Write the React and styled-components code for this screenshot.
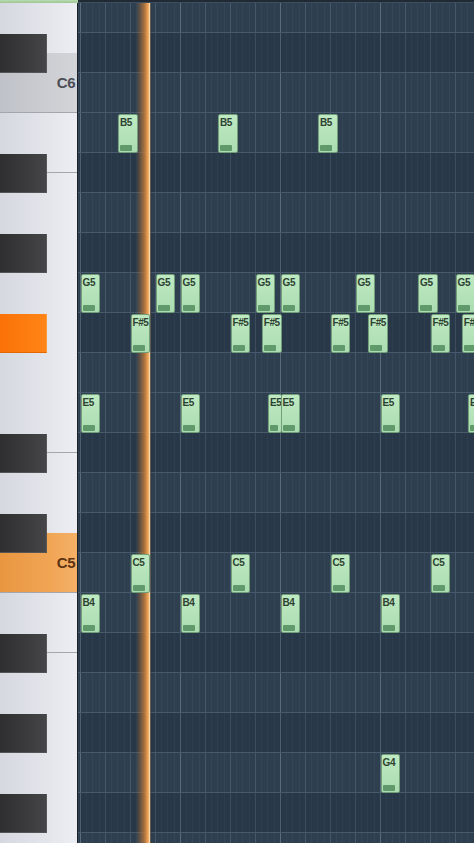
import React from "react";
import styled, { createGlobalStyle } from "styled-components";

const GlobalStyle = createGlobalStyle`
  html, body {
    margin: 0;
    padding: 0;
    background: #2d3e4f;
    overflow: hidden;
  }
`;

const STEP = 6.25;
const ROW = 40;

const Page = styled.div`
  display: flex;
  flex-direction: column;
  width: 474px;
  height: 843px;
  overflow: hidden;
  font-family: "Liberation Sans", Arial, sans-serif;
`;

const TopBar = styled.div`
  display: flex;
  height: 3px;
  flex-shrink: 0;
`;

const TopKeys = styled.div`
  width: 78px;
  background: linear-gradient(180deg, #b9dcb0, #9cc595);
`;

const TopGrid = styled.div`
  flex: 1;
  background: #1f2a35;
  border-bottom: 1px solid #3d4e5e;
`;

const Roll = styled.div`
  display: flex;
  flex: 1;
  overflow: hidden;
`;

const Keyboard = styled.div`
  width: 77px;
  flex-shrink: 0;
  border-right: 1px solid #1b2128;
  overflow: hidden;
`;

const KeyGrid = styled.div`
  display: grid;
  grid-template-columns: 47px 1fr;
  grid-auto-rows: 20px;
  margin-top: -30px;
`;

const whiteBg = {
  none: "linear-gradient(90deg, #d5d8df 0%, #e3e5eb 60%, #eceef3 100%)",
  grey: "linear-gradient(90deg, #bfc2c8 0%, #cbcdd2 60%, #d3d5d9 100%)",
  orange: "linear-gradient(90deg, #e9963f 0%, #f0a453 60%, #f4b066 100%)",
};

const WhiteKey = styled.div`
  grid-column: 1 / -1;
  grid-row: ${({ $start, $span }) => `${$start + 1} / span ${$span}`};
  background: ${({ $hl }) => whiteBg[$hl]};
  border-bottom: 1px solid ${({ $edge }) => ($edge ? "#a2a6ad" : "transparent")};
  display: flex;
  align-items: center;
  justify-content: flex-end;
  padding-right: 2px;
  box-sizing: border-box;
`;

const KeyLabel = styled.span`
  font-size: 15px;
  font-weight: bold;
  letter-spacing: -0.5px;
  color: ${({ $hl }) => ($hl === "orange" ? "#5e3312" : "#4b4e56")};
`;

const BlackKey = styled.div`
  grid-column: 1;
  grid-row: ${({ $start }) => `${$start + 1} / span 2`};
  margin: 1px 0 0 0;
  background: ${({ $active }) =>
    $active
      ? "linear-gradient(90deg, #fa7208, #ff8416)"
      : "linear-gradient(90deg, #2f2f31, #3e3e40 70%, #464648)"};
  border-right: 1px solid ${({ $active }) => ($active ? "#ff9a3a" : "#58585a")};
  border-bottom: 1px solid ${({ $active }) => ($active ? "#e06a00" : "#555557")};
  box-sizing: border-box;
`;

const Grid = styled.div`
  position: relative;
  flex: 1;
  overflow: hidden;
  background-color: #2e3f50;
  background-image:
    repeating-linear-gradient(90deg, #5a6b7b 0 1px, transparent 1px 100px),
    repeating-linear-gradient(90deg, #45576a 0 1px, transparent 1px 25px),
    repeating-linear-gradient(90deg, #344657 0 1px, transparent 1px 6.25px);
  background-position: 2px 0;
`;

const Rows = styled.div`
  display: flex;
  flex-direction: column;
  margin-top: -10px;
`;

const Row = styled.div`
  position: relative;
  height: ${ROW}px;
  flex-shrink: 0;
  box-sizing: border-box;
  border-bottom: 1px solid #47596b;
  background: ${({ $black }) => ($black ? "rgba(10, 20, 30, 0.15)" : "transparent")};
`;

const Note = styled.div`
  position: absolute;
  z-index: 2;
  top: 1px;
  height: 39px;
  box-sizing: border-box;
  border: 1px solid #729f79;
  border-radius: 2px;
  background: linear-gradient(180deg, #bfe9c2 0%, #abddb1 100%);
  padding: 3px 0 0 1px;
`;

const NoteName = styled.span`
  display: block;
  font-size: 10px;
  font-weight: bold;
  line-height: 10px;
  letter-spacing: -0.4px;
  color: #2e4232;
  white-space: nowrap;
`;

const Velocity = styled.div`
  position: absolute;
  left: 1px;
  bottom: 1px;
  width: 70%;
  height: 6px;
  background: #619a6a;
  border-radius: 1px;
`;

const Playhead = styled.div`
  position: absolute;
  z-index: 1;
  top: 0;
  bottom: 0;
  left: 58px;
  width: 16px;
  background: linear-gradient(
    90deg,
    rgba(150, 100, 60, 0) 0%,
    rgba(170, 110, 55, 0.45) 25%,
    rgba(200, 125, 55, 0.75) 50%,
    #dd9148 68%,
    #eeb06a 78%,
    #ffe2b4 86%,
    rgba(45, 45, 45, 0.55) 92%,
    rgba(40, 50, 60, 0) 100%
  );
`;

const whiteKeys = [
  { start: 0, span: 4 },
  { start: 4, span: 3, hl: "grey", label: "C6" },
  { start: 7, span: 3, edge: true },
  { start: 10, span: 4 },
  { start: 14, span: 4 },
  { start: 18, span: 3 },
  { start: 21, span: 3, edge: true },
  { start: 24, span: 4 },
  { start: 28, span: 3, hl: "orange", label: "C5" },
  { start: 31, span: 3, edge: true },
  { start: 34, span: 4 },
  { start: 38, span: 4 },
  { start: 42, span: 3 },
];

const blackKeys = [
  { start: 3 },
  { start: 9 },
  { start: 13 },
  { start: 17, active: true },
  { start: 23 },
  { start: 27 },
  { start: 33 },
  { start: 37 },
  { start: 41 },
];

const rows = [
  "D6", "C#6", "C6", "B5", "A#5", "A5", "G#5", "G5", "F#5", "F5",
  "E5", "D#5", "D5", "C#5", "C5", "B4", "A#4", "A4", "G#4", "G4",
  "F#4", "F4",
];

const notes = {
  B5: [[6], [22], [38]],
  G5: [[0], [12], [16], [28], [32], [44], [54], [60]],
  "F#5": [[8], [24], [29], [40], [46], [56], [61]],
  E5: [[0], [16], [30, 2], [32], [48], [62]],
  C5: [[8], [24], [40], [56]],
  B4: [[0], [16], [32], [48]],
  G4: [[48]],
};

function App() {
  return (
    <Page>
      <GlobalStyle />
      <TopBar>
        <TopKeys />
        <TopGrid />
      </TopBar>
      <Roll>
        <Keyboard>
          <KeyGrid>
            {whiteKeys.map((k) => (
              <WhiteKey
                key={k.start}
                $start={k.start}
                $span={k.span}
                $hl={k.hl || "none"}
                $edge={k.edge || k.hl}
              >
                {k.label && <KeyLabel $hl={k.hl}>{k.label}</KeyLabel>}
              </WhiteKey>
            ))}
            {blackKeys.map((k) => (
              <BlackKey key={k.start} $start={k.start} $active={k.active} />
            ))}
          </KeyGrid>
        </Keyboard>
        <Grid>
          <Playhead />
          <Rows>
            {rows.map((name) => (
              <Row key={name} $black={name.includes("#")}>
                {(notes[name] || []).map(([step, len = 3]) => (
                  <Note
                    key={step}
                    style={{ left: 2.5 + step * STEP, width: len * STEP + 1 }}
                  >
                    <NoteName>{name}</NoteName>
                    <Velocity />
                  </Note>
                ))}
              </Row>
            ))}
          </Rows>
        </Grid>
      </Roll>
    </Page>
  );
}

export default App;
